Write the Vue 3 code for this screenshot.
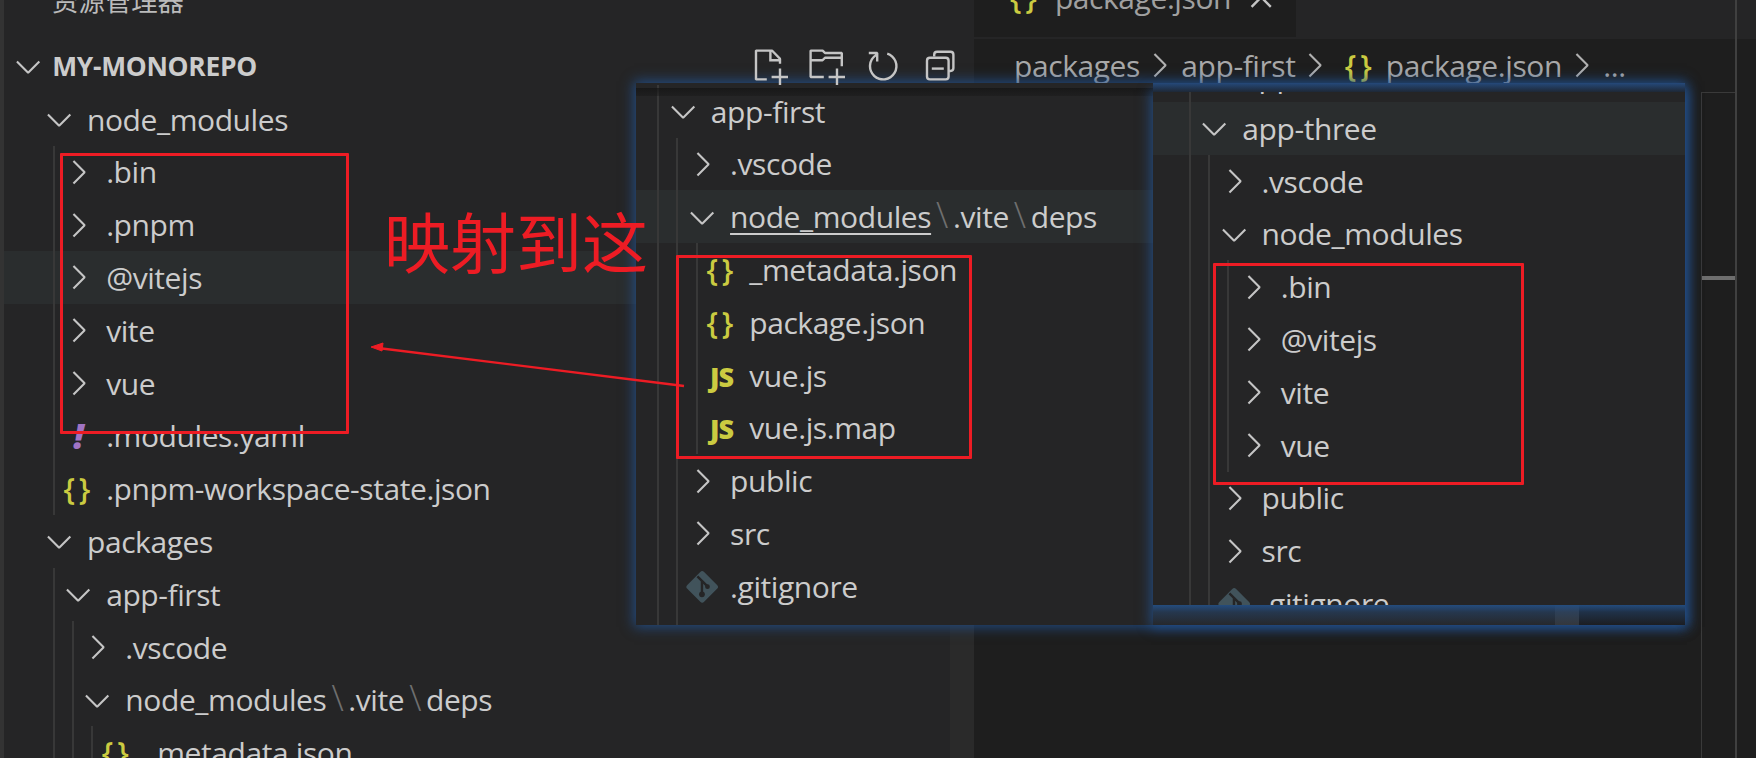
<script setup>
const F = (level, label, extra = {}) => ({ level, icon: 'cr', parts: [label], ...extra })
const O = (level, label, extra = {}) => ({ level, icon: 'cd', parts: [label], ...extra })
const mainRows = [
  O(1, 'node_modules'),
  F(2, '.bin'),
  F(2, '.pnpm'),
  F(2, '@vitejs', { hover: true }),
  F(2, 'vite'),
  F(2, 'vue'),
  F(2, '.modules.yaml', { icon: 'yaml' }),
  F(2, '.pnpm-workspace-state.json', { icon: 'json' }),
  O(1, 'packages'),
  O(2, 'app-first'),
  F(3, '.vscode'),
  { level: 3, icon: 'cd', parts: ['node_modules', '.vite', 'deps'] },
  F(4, '_metadata.json', { icon: 'json' })
]
const panes = [
  {
    cls: 'win-a',
    rows: [
      O(1, 'app-first'),
      F(2, '.vscode'),
      { level: 2, icon: 'cd', parts: ['node_modules', '.vite', 'deps'], hover: true, under: true },
      F(3, '_metadata.json', { icon: 'json' }),
      F(3, 'package.json', { icon: 'json' }),
      F(3, 'vue.js', { icon: 'js' }),
      F(3, 'vue.js.map', { icon: 'js' }),
      F(2, 'public'),
      F(2, 'src'),
      F(2, '.gitignore', { icon: 'git' }),
      { level: 2, icon: '', parts: [''] }
    ]
  },
  {
    cls: 'win-b',
    rows: [
      O(1, 'app-second'),
      O(1, 'app-three', { hover: true }),
      F(2, '.vscode'),
      O(2, 'node_modules'),
      F(3, '.bin'),
      F(3, '@vitejs'),
      F(3, 'vite'),
      F(3, 'vue'),
      F(2, 'public'),
      F(2, 'src'),
      F(2, '.gitignore', { icon: 'git' })
    ]
  }
]
const crumbs = ['packages', 'app-first']
</script>

<template>
  <div class="app">
    <svg class="sprite" width="0" height="0" aria-hidden="true">
      <defs>
        <symbol id="cr" viewBox="0 0 16 16"><path d="M10.072 8.024L5.715 3.667l.618-.62L11 7.716v.618L6.333 13l-.618-.619 4.357-4.357z" /></symbol>
        <symbol id="cd" viewBox="0 0 16 16"><path d="M7.976 10.072l4.357-4.357.62.618L8.284 11h-.618L3 6.333l.619-.618 4.357 4.357z" /></symbol>
        <symbol id="git" viewBox="0 0 16 16">
          <path fill="#41535b" d="M7.2 2.1a1.1 1.1 0 0 1 1.6 0l5.4 5.4a1.1 1.1 0 0 1 0 1.6l-5.4 5.4a1.1 1.1 0 0 1-1.6 0L1.8 9.1a1.1 1.1 0 0 1 0-1.6z" />
          <path fill="none" stroke="#252526" stroke-width="1" d="M6 3.9l4.2 4.2M7.9 6v5" />
          <circle cx="7.9" cy="11.4" r="1.2" fill="#252526" />
          <circle cx="10.2" cy="8.2" r="1" fill="#252526" />
        </symbol>
      </defs>
    </svg>

    <aside class="sidebar">
      <div class="activity"></div>
      <div class="explorer">
        <div class="title">资源管理器</div>
        <div class="head">
          <span class="tw"><svg viewBox="0 0 16 16"><use href="#cd" /></svg></span>
          <span class="head-name">MY-MONOREPO</span>
          <div class="tools">
            <svg viewBox="0 0 16 16"><path d="M9.5 1.1l3.4 3.5.1.4v2h-1V6H8V2H3v11h4v1H2.5l-.5-.5v-12l.5-.5h6.7l.3.1zM9 2v3h2.9L9 2zm4 14h-1v-3H9v-1h3V9h1v3h3v1h-3v3z" /></svg>
            <svg viewBox="0 0 16 16"><path d="M14.5 2H7.71l-.85-.85L6.51 1h-5l-.5.5v11l.5.5H7v-1H1.99V6h4.49l.35-.15.86-.86H14v1.5l-.001 1.51H15V2.5l-.5-.5zm-.51 2h-6.5l-.35.15-.86.86H2v-3h4.29l.85.85.36.15H14l-.01.99zM13 16h-1v-3H9v-1h3V9h1v3h3v1h-3v3z" /></svg>
            <svg viewBox="0 0 16 16"><path d="M4.681 3H2V2h3.5l.5.5V6H5V4a5 5 0 1 0 4.53-.761l.302-.954A6 6 0 1 1 4.681 3z" /></svg>
            <svg viewBox="0 0 16 16" class="outline"><path d="M5.5 4V3.2A1.2 1.2 0 0 1 6.7 2h5.6a1.2 1.2 0 0 1 1.2 1.2v5.6a1.2 1.2 0 0 1-1.2 1.2h-.8" /><rect x="2.5" y="4.5" width="9" height="9" rx="1.2" /><path d="M4.5 9h5" /></svg>
          </div>
        </div>
        <div v-for="r in mainRows" :key="r.parts.join()" class="row main-row" :class="{ hover: r.hover }">
          <span v-for="n in r.level" :key="n" class="ind" :class="{ guide: n > 1 }"></span>
          <span class="tw">
            <svg v-if="r.icon === 'cr' || r.icon === 'cd' || r.icon === 'git'" viewBox="0 0 16 16"><use :href="'#' + r.icon" /></svg>
            <span v-else :class="'ic-' + r.icon"></span>
          </span>
          <span class="name">
            <template v-for="(p, i) in r.parts" :key="i">
              <span v-if="i" class="sep">\</span><span>{{ p }}</span>
            </template>
          </span>
        </div>
      </div>
      <div class="side-scroll"></div>
    </aside>

    <main class="editor">
      <div class="tabs">
        <div class="tab">
          <span class="ic-json"></span>
          <span class="tab-name">package.json</span>
          <svg viewBox="0 0 16 16"><path d="M8 8.707l3.646 3.647.708-.707L8.707 8l3.647-3.646-.707-.708L8 7.293 4.354 3.646l-.707.708L7.293 8l-3.646 3.646.707.708L8 8.707z" /></svg>
        </div>
      </div>
      <div class="crumbs">
        <template v-for="c in crumbs" :key="c">
          <span>{{ c }}</span>
          <svg viewBox="0 0 16 16"><use href="#cr" /></svg>
        </template>
        <span class="ic-json crumb-json"></span>
        <span>package.json</span>
        <svg viewBox="0 0 16 16"><use href="#cr" /></svg>
        <span>...</span>
      </div>
      <div class="body">
        <div class="code"></div>
        <div class="minimap"><div class="slider"></div></div>
        <div class="vscroll"></div>
      </div>
      <div class="edge-line"></div>
    </main>

    <section v-for="p in panes" :key="p.cls" class="win" :class="p.cls">
      <div class="pane">
        <div v-for="r in p.rows" :key="r.parts.join()" class="row" :class="{ hover: r.hover }">
          <span v-for="n in r.level" :key="n" class="ind guide"></span>
          <span class="tw">
            <svg v-if="r.icon === 'cr' || r.icon === 'cd' || r.icon === 'git'" viewBox="0 0 16 16"><use :href="'#' + r.icon" /></svg>
            <span v-else-if="r.icon" :class="'ic-' + r.icon"></span>
          </span>
          <span class="name">
            <template v-for="(s, i) in r.parts" :key="i">
              <span v-if="i" class="sep">\</span><span :class="{ under: r.under && i === 0 }">{{ s }}</span>
            </template>
          </span>
        </div>
      </div>
      <div class="top-shade"></div>
      <div v-if="p.cls === 'win-b'" class="hbar">
        <span class="hbar-left"></span>
        <span class="hbar-thumb"></span>
        <span class="hbar-right"></span>
      </div>
    </section>

    <div class="mark m1"></div>
    <div class="mark m2"></div>
    <div class="mark m3"></div>
    <div class="note">映射到这</div>
    <svg class="arrow" width="1756" height="758" viewBox="0 0 1756 758">
      <path d="M684 386L378 348" fill="none" stroke="#ed1c24" stroke-width="2.4" />
      <path d="M371 347l12-4-1 8z" fill="#ed1c24" stroke="#ed1c24" />
    </svg>
  </div>
</template>

<style scoped>
.app {
  position: relative;
  display: flex;
  width: 1756px;
  height: 758px;
  overflow: hidden;
  background: #1e1e1e;
  color: #cccccc;
  font-family: "Open Sans", "Noto Sans CJK SC", sans-serif;
  font-size: 30px;
  letter-spacing: -0.42px;
}
.sprite { position: absolute; }
svg { fill: #c5c5c5; flex: none; }

/* sidebar */
.sidebar {
  position: relative;
  display: flex;
  flex: none;
  width: 974px;
  height: 758px;
  background: #252526;
  overflow: hidden;
}
.activity { flex: none; width: 4px; background: #333333; }
.explorer { flex: 1; min-width: 0; }
.side-scroll { flex: none; width: 24px; margin-top: 300px; background: #2a2a2a; }
.title {
  height: 40px;
  padding-left: 48px;
  font-family: "Noto Sans CJK SC", sans-serif;
  font-size: 26.4px;
  letter-spacing: 0;
  line-height: 0;
  color: #bbbbbb;
}
.head {
  display: flex;
  align-items: center;
  height: 52.8px;
  padding: 0 0 1px 4.8px;
  box-sizing: border-box;
}
.head .tw { width: 38.4px; }
.head-name {
  margin-left: 5px;
  font-size: 26.4px;
  font-weight: 700;
  letter-spacing: -0.3px;
  color: #cccccc;
}
.tools {
  display: flex;
  gap: 18.6px;
  margin-left: auto;
  margin-right: -9px;
  position: relative;
  z-index: 1;
}
.tools svg { width: 38.4px; height: 38.4px; }
.tools .outline { fill: none; stroke: #c5c5c5; stroke-width: 1; }

/* tree rows */
.row {
  display: flex;
  align-items: center;
  height: 52.8px;
  white-space: nowrap;
}
.row.hover { background: #2a2d2e; }
.main-row { padding-left: 16.8px; }
.ind {
  flex: none;
  align-self: stretch;
  width: 19.2px;
}
.ind.guide {
  background: linear-gradient(#383838, #383838) 12.6px 0 / 2px 100% no-repeat;
}
.main-row .ind:first-child { background: none; }
.tw {
  flex: none;
  display: flex;
  align-items: center;
  justify-content: center;
  width: 38.4px;
  height: 38.4px;
}
.tw svg { width: 38.4px; height: 38.4px; }
.name { margin-left: 8.6px; color: #cccccc; }
.sep { margin: 0 5px; color: #6f6f6f; font-weight: 300; font-size: 36px; line-height: 1; }
.under { text-decoration: underline; text-underline-offset: 5px; text-decoration-thickness: 2px; }

/* seti file icons */
.ic-json::before {
  content: "{ }";
  color: #cbcb41;
  font-size: 30px;
  font-weight: 600;
  letter-spacing: 0;
  word-spacing: -4px;
}
.tw .ic-json { margin-left: -3px; }
.ic-js::before {
  content: "JS";
  color: #cbcb41;
  font-size: 27px;
  font-weight: 800;
  letter-spacing: -1px;
}
.ic-yaml::before {
  content: "!";
  color: #a074c4;
  font-size: 35px;
  font-weight: 800;
  font-style: italic;
}

/* editor */
.editor { position: relative; display: flex; flex-direction: column; flex: 1; min-width: 0; }
.tabs { height: 39px; flex: none; background: #252526; }
.tab {
  display: flex;
  align-items: center;
  width: 322px;
  height: 37px;
  padding-left: 36px;
  box-sizing: border-box;
  background: #1e1e1e;
  color: #a0a0a0;
  overflow: hidden;
}
.tab > * { transform: translateY(-21px); }
.tab-name { margin-left: 18px; }
.tab svg { width: 38.4px; height: 38.4px; margin-left: 11px; }
.crumbs {
  display: flex;
  align-items: center;
  flex: none;
  height: 53px;
  padding: 0 0 0 40px;
  box-sizing: border-box;
  color: #a9a9a9;
  white-space: nowrap;
}
.crumbs svg { width: 38.4px; height: 38.4px; margin-right: 3px; fill: #b0b0b0; }
.crumb-json { margin: 0 14px 0 8px; }
.body { display: flex; flex: 1; min-height: 0; }
.code { flex: 1; }
.minimap {
  flex: none;
  width: 35px;
  border-left: 1.5px solid #3a3a3a;
  border-top: 1.5px solid #3a3a3a;
  box-sizing: border-box;
}
.slider { height: 4px; margin-top: 182.5px; background: #6e6e6e; }
.vscroll { flex: none; width: 20px; }
.edge-line {
  position: absolute;
  top: 0;
  bottom: 0;
  right: 19px;
  width: 2px;
  background: #404040;
}

/* overlapping sticky panels */
.win {
  position: absolute;
  display: flex;
  flex-direction: column;
  background: #252526;
  box-shadow: 0 0 12px 2px rgba(34, 84, 148, .85);
}
.win-a { left: 636px; top: 83px; width: 1049px; height: 542px; }
.win-b { left: 1153px; top: 92px; width: 532px; height: 533px; }
.pane { position: relative; overflow: hidden; flex: 1; min-height: 0; }
.win-a .pane { padding: 1.8px 0 0 8.7px; }
.win-a .row.hover { margin-left: -8.7px; padding-left: 8.7px; }
.win-b .pane { flex: none; height: 513px; padding-left: 23.2px; background: #252526; }
.win-b .row:first-child { margin-top: -42.8px; }
.win-b .row.hover { margin-left: -23.2px; padding-left: 23.2px; }
.top-shade {
  position: absolute;
  left: 0;
  right: 0;
  top: 5px;
  height: 8px;
  background: linear-gradient(rgba(20, 20, 20, .75), rgba(20, 20, 20, .35));
  pointer-events: none;
}
.win-b .top-shade {
  top: -9px;
  height: 9px;
  background: linear-gradient(#25497a, #1e2836);
}
.hbar { position: relative; display: flex; flex: none; height: 20px; }
.hbar::after {
  content: "";
  position: absolute;
  inset: 0;
  background: linear-gradient(rgba(36, 78, 130, .95), rgba(36, 78, 130, .4) 35%, rgba(36, 78, 130, 0));
}
.hbar-left { width: 402px; background: #26282c; }
.hbar-thumb { width: 24px; background: #34373c; }
.hbar-right { flex: 1; background: #1c1e22; }

/* annotations */
.mark {
  position: absolute;
  border: 3.5px solid #ed1c24;
  box-sizing: border-box;
  border-radius: 1px;
  pointer-events: none;
}
.m1 { left: 60px; top: 153px; width: 289px; height: 281px; }
.m2 { left: 676px; top: 255px; width: 296px; height: 204px; }
.m3 { left: 1213px; top: 263px; width: 311px; height: 222px; }
.note {
  position: absolute;
  left: 384px;
  top: 192px;
  font-family: "Noto Sans CJK SC", sans-serif;
  font-size: 66px;
  line-height: 94px;
  letter-spacing: 0;
  color: #ed1c24;
}
.arrow { position: absolute; left: 0; top: 0; pointer-events: none; }
</style>
